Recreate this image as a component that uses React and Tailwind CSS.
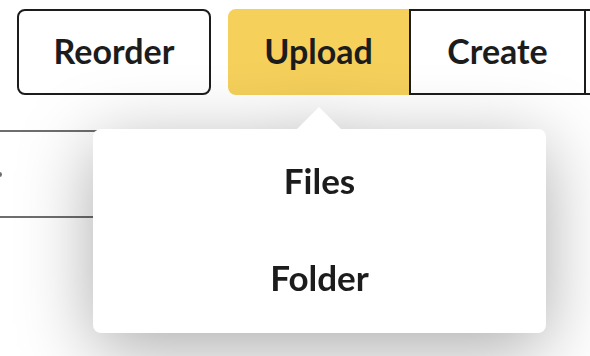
import React from 'react'

const font = { fontFamily: 'Lato, "Open Sans", sans-serif' }

const UploadMenu = () => {
  return (
    <div className="absolute left-[93px] top-[107px] w-[453px] drop-shadow-[0_16px_36px_rgba(0,0,0,0.33)]">
      {/* caret */}
      <div className="ml-[204px] h-0 w-0 border-x-[22px] border-b-[22px] border-x-transparent border-b-white" />
      <div className="flex flex-col rounded-[8px] bg-white py-[6px]">
        <button className="flex h-[96px] items-center justify-center pb-[5px] text-[35px] font-bold text-[#1c1c1c]">
          Files
        </button>
        <button className="flex h-[96px] items-center justify-center pb-[4px] text-[35px] font-bold text-[#1c1c1c]">
          Folder
        </button>
      </div>
    </div>
  )
}

const App = () => {
  return (
    <div className="relative h-[356px] w-[590px] overflow-hidden bg-white" style={font}>
      <div className="flex pl-[17px] pt-[9px]">
        <button className="flex h-[86px] w-[194px] shrink-0 items-center justify-center rounded-[8px] border-2 border-[#1c1c1c] bg-white pb-[4px] text-[34px] font-bold text-[#1c1c1c]">
          Reorder
        </button>
        <div className="ml-[17px] flex shrink-0">
          <button className="flex h-[86px] w-[181px] shrink-0 items-center justify-center rounded-l-[8px] bg-[#f5d05b] pb-[4px] text-[34px] font-bold text-[#1c1c1c]">
            Upload
          </button>
          <button className="flex h-[86px] w-[177px] shrink-0 items-center justify-center border-2 border-[#1c1c1c] bg-white pb-[4px] text-[34px] font-bold text-[#1c1c1c]">
            Create
          </button>
          <button className="h-[86px] w-[120px] shrink-0 border-y-2 border-r-2 border-[#1c1c1c] bg-white" />
        </div>
      </div>

      {/* list behind the menu */}
      <div className="mt-[35px] flex h-[88px] w-[300px] items-center border-y-2 border-[#6e6e6e]">
        <span className="-ml-[3px] h-[5px] w-[5px] rounded-full bg-[#6e6e6e]" />
      </div>

      <UploadMenu />
    </div>
  )
}

export default App
